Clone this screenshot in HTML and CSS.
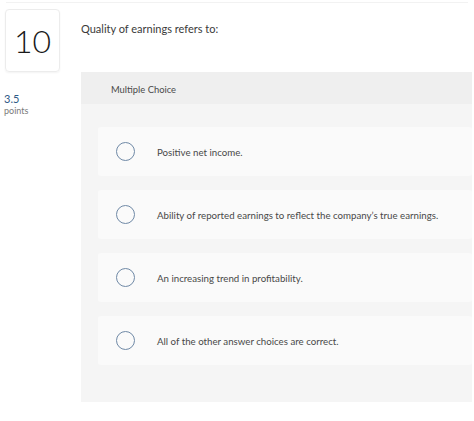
FILE: index.html
```html
<!DOCTYPE html>
<html>
<head>
<meta charset="utf-8">
<link rel="stylesheet" href="styles.css">
</head>
<body>
<div class="topline"></div>
<div class="page">
  <aside class="side">
    <div class="qnum">10</div>
    <div class="pts">3.5</div>
    <div class="pts-label">points</div>
  </aside>
  <main class="main">
    <div class="question">Quality of earnings refers to:</div>
    <section class="panel">
      <div class="panel-head">Multiple Choice</div>
      <div class="options">
        <div class="option"><span class="radio"></span><span class="opt-text">Positive net income.</span></div>
        <div class="option"><span class="radio"></span><span class="opt-text">Ability of reported earnings to reflect the company’s true earnings.</span></div>
        <div class="option"><span class="radio"></span><span class="opt-text">An increasing trend in profitability.</span></div>
        <div class="option"><span class="radio"></span><span class="opt-text">All of the other answer choices are correct.</span></div>
      </div>
    </section>
  </main>
</div>
</body>
</html>
```
FILE: styles.css
```css
html, body {
  margin: 0;
  padding: 0;
  background: #ffffff;
}
body {
  font-family: Lato, "Open Sans", "Liberation Sans", sans-serif;
  color: #333;
  width: 474px;
  height: 421px;
  overflow: hidden;
}
.topline {
  height: 1px;
  margin: 2px 6px 0 6px;
  background: #f2f2f2;
}
.page {
  display: flex;
  padding-top: 6px;
}
.side {
  width: 81px;
  flex: none;
}
.qnum {
  width: 55px;
  height: 63px;
  margin-left: 5px;
  border: 1px solid #ececec;
  border-radius: 4px;
  box-shadow: 0 1px 2px rgba(0,0,0,0.05);
  display: flex;
  align-items: center;
  justify-content: center;
  font-size: 32px;
  font-weight: 300;
  color: #1a1a1a;
  padding-bottom: 1px;
  box-sizing: border-box;
}
.pts {
  margin: 20px 0 0 4px;
  font-size: 11px;
  color: #2f5a86;
  line-height: 13px;
}
.pts-label {
  margin-left: 4px;
  font-size: 9px;
  color: #7a7a7a;
  line-height: 12px;
}
.main {
  flex: 1;
  padding-right: 2px;
}
.question {
  font-size: 11px;
  line-height: 16px;
  margin-top: 12px;
  height: 51px;
  color: #3a3a3a;
}
.panel {
  background: #f5f5f5;
  height: 330px;
}
.panel-head {
  background: #efefef;
  height: 32px;
  padding-left: 30px;
  font-size: 9.4px;
  line-height: 36px;
  color: #4a4a4a;
}
.options {
  display: flex;
  flex-direction: column;
  gap: 14px;
  padding: 23px 0 0 17px;
}
.option {
  height: 49px;
  background: #fafafa;
  border-radius: 3px;
  display: flex;
  align-items: center;
}
.radio {
  width: 17px;
  height: 17px;
  border: 1.3px solid #6f89a6;
  border-radius: 50%;
  margin-left: 18px;
  flex: none;
}
.opt-text {
  margin-left: 22px;
  font-size: 9.7px;
  color: #484848;
  white-space: nowrap;
}
```
